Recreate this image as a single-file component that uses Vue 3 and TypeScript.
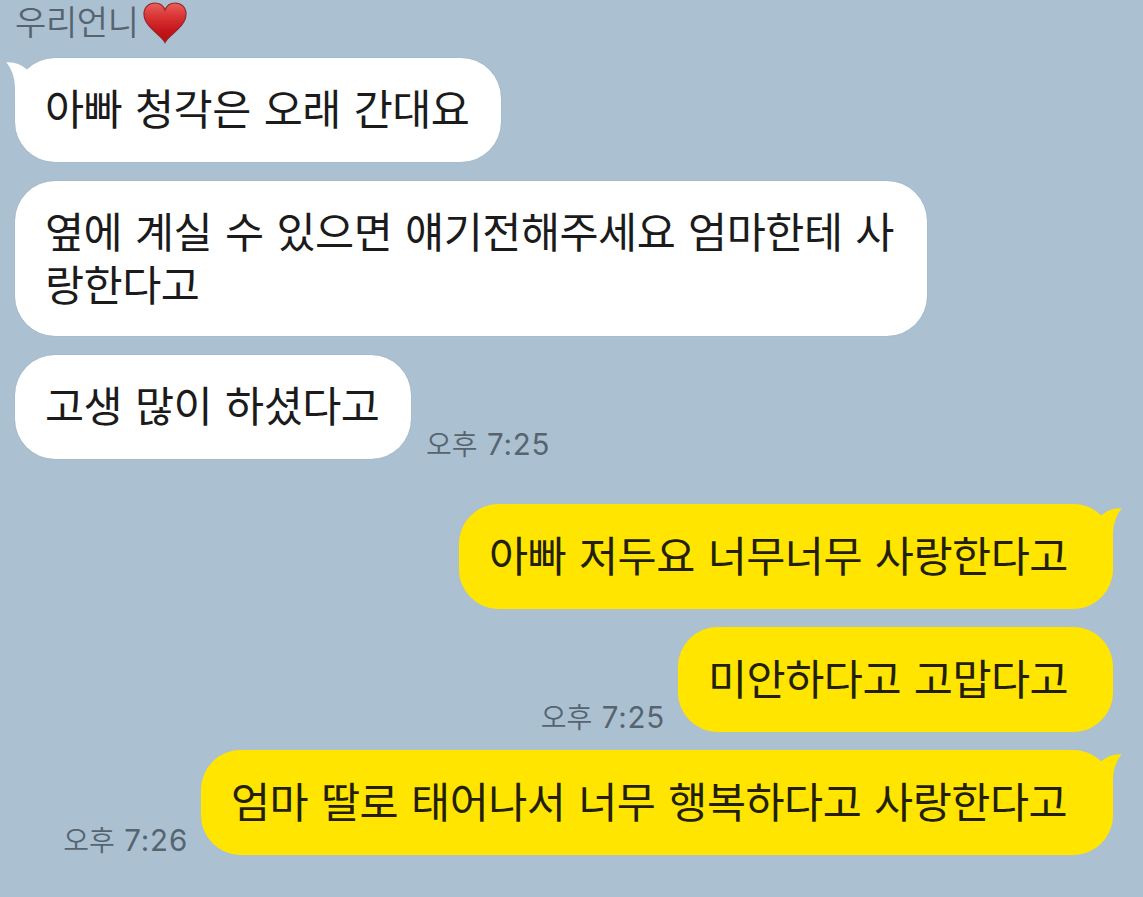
<script setup lang="ts">
interface Message {
  id: number
  text: string
  width: number
  time?: string
  tail?: boolean
}

const sender = '우리언니'

const received: Message[] = [
  { id: 1, text: '아빠 청각은 오래 간대요', width: 486, tail: true },
  { id: 2, text: '옆에 계실 수 있으면 얘기전해주세요 엄마한테 사랑한다고', width: 912 },
  { id: 3, text: '고생 많이 하셨다고', width: 396, time: '7:25' }
]

const sent: Message[] = [
  { id: 4, text: '아빠 저두요 너무너무 사랑한다고', width: 654, tail: true },
  { id: 5, text: '미안하다고 고맙다고', width: 435, time: '7:25' },
  { id: 6, text: '엄마 딸로 태어나서 너무 행복하다고 사랑한다고', width: 912, time: '7:26', tail: true }
]
</script>

<template>
  <main class="chat">
    <header class="chat__sender">
      <span class="chat__name">{{ sender }}</span>
      <svg class="chat__heart" viewBox="0 0 44 42" aria-hidden="true">
        <defs>
          <linearGradient id="heart-fill" x1="0" y1="0" x2="0" y2="1">
            <stop offset="0" stop-color="#e8605a" />
            <stop offset="0.35" stop-color="#d93434" />
            <stop offset="0.7" stop-color="#c5161b" />
            <stop offset="1" stop-color="#b10b12" />
          </linearGradient>
        </defs>
        <path
          d="M22 40.500C18.500 33 1 25 1 12C1 5 6 1 12 1C17 1 20.500 4 22 8C23.500 4 27 1 32 1C38 1 43 5 43 12C43 25 25.500 33 22 40.500Z"
          fill="url(#heart-fill)"
          stroke="#96262c"
          stroke-width="1.200"
        />
      </svg>
    </header>

    <section class="chat__group">
      <div v-for="message in received" :key="message.id" class="row">
        <div class="bubble" :style="{ width: `${message.width}px` }">
          <svg v-if="message.tail" class="bubble__tail" viewBox="0 0 36 40" aria-hidden="true">
            <path d="M0.300 4.200Q12 3.500 20.700 11.300L36 20V40H9V29Q8.500 14 0.300 4.200Z" />
          </svg>
          <p>{{ message.text }}</p>
        </div>
        <time v-if="message.time"><span>오후</span>{{ message.time }}</time>
      </div>
    </section>

    <section class="chat__group chat__group--sent">
      <div v-for="message in sent" :key="message.id" class="row row--sent">
        <div class="bubble bubble--sent" :style="{ width: `${message.width}px` }">
          <svg v-if="message.tail" class="bubble__tail" viewBox="0 0 36 40" aria-hidden="true">
            <path d="M0.300 4.200Q12 3.500 20.700 11.300L36 20V40H9V29Q8.500 14 0.300 4.200Z" />
          </svg>
          <p>{{ message.text }}</p>
        </div>
        <time v-if="message.time"><span>오후</span>{{ message.time }}</time>
      </div>
    </section>
  </main>
</template>

<style>
body {
  background: #abc0d1;
  margin: 0;
}
</style>

<style scoped>
.chat {
  background: #abc0d1;
  box-sizing: border-box;
  font-family: 'Noto Sans CJK KR', sans-serif;
  height: 897px;
  padding: 0 30px 0 15px;
}

.chat__sender {
  align-items: flex-start;
  display: flex;
  height: 58px;
}

.chat__name {
  color: #56646f;
  font-size: 34px;
  font-weight: 350;
  letter-spacing: -0.4px;
  line-height: 42px;
  width: 127.5px;
}

.chat__heart {
  height: 42px;
  margin-top: 2px;
  width: 44px;
}

.chat__group {
  display: grid;
  gap: 19px;
}

.chat__group--sent {
  gap: 18px;
  margin-top: 45px;
}

.row {
  align-items: flex-end;
  display: flex;
  gap: 15px;
}

.row--sent {
  flex-direction: row-reverse;
  gap: 13px;
}

.bubble {
  background: #ffffff;
  border-radius: 40px;
  box-shadow: 0 0 1px rgba(60, 85, 105, 0.35);
  box-sizing: border-box;
  color: #1b1b1b;
  flex: none;
  min-height: 104px;
  padding: 22px 29px 27px 30px;
  position: relative;
}

.bubble--sent {
  background: #ffe500;
  box-shadow: 0 0 1px rgba(235, 220, 70, 0.8);
  color: #241f08;
  min-height: 105px;
  padding-top: 23px;
}

.bubble p {
  font-size: 42.5px;
  letter-spacing: -0.5px;
  line-height: 53px;
  margin: 0;
  word-break: break-all;
  word-spacing: 3.8px;
}

.bubble__tail {
  fill: #ffffff;
  height: 40px;
  left: -9px;
  position: absolute;
  top: 0;
  width: 36px;
}

.bubble--sent .bubble__tail {
  fill: #ffe500;
  left: auto;
  right: -9px;
  transform: scaleX(-1);
}

time {
  color: #56646f;
  font-family: Inter, 'Noto Sans CJK KR', sans-serif;
  font-size: 29.5px;
  letter-spacing: 0.8px;
  line-height: 28px;
  white-space: nowrap;
}

time span {
  font-size: 28px;
  font-weight: 350;
  letter-spacing: 0;
  margin-right: 9.5px;
}
</style>
